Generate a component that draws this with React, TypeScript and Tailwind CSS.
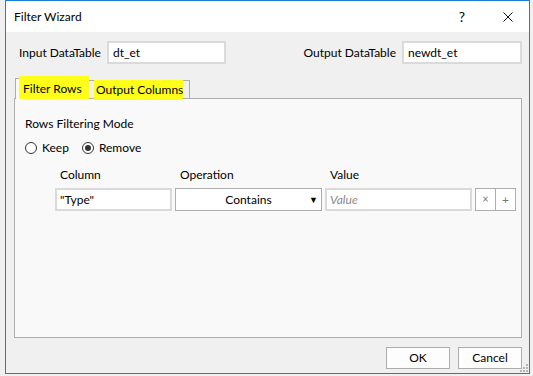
import React from 'react';

const font = { fontFamily: 'Lato, "Noto Sans", sans-serif' };

const Radio = ({ checked, label }: { checked?: boolean; label: string }) => (
  <label className="flex items-center gap-[5px]">
    <span className="w-[12px] h-[12px] rounded-full border border-[#333333] bg-white flex items-center justify-center">
      {checked && <span className="w-[6px] h-[6px] rounded-full bg-[#333333]" />}
    </span>
    <span>{label}</span>
  </label>
);

export default function App() {
  return (
    <div className="w-[533px] h-[376px] bg-[#f0f0f0] overflow-hidden text-[12px] text-black" style={font}>
      <div className="relative ml-[5px] w-[525px] h-[374px] border border-[#1a7fd4] bg-[#f0f0f0] flex flex-col">
        {/* title bar */}
        <div className="h-[31px] bg-white flex items-center pl-[8px] shrink-0">
          <span>Filter Wizard</span>
          <span className="ml-auto mr-[38px] text-[14px]">?</span>
          <svg width="10" height="10" viewBox="0 0 10 10" className="mr-[16px]">
            <path d="M0.5 0.5 L9.5 9.5 M9.5 0.5 L0.5 9.5" stroke="#111" strokeWidth="1" />
          </svg>
        </div>

        <div className="flex-1 flex flex-col pl-[8px] pr-[7px]">
          {/* table names */}
          <div className="mt-[9px] h-[23px] flex items-center pl-[5px]">
            <span>Input DataTable</span>
            <div className="ml-[6px] w-[119px] h-[23px] border-2 border-[#dadada] bg-white flex items-center px-[4px]">dt_et</div>
            <span className="ml-auto">Output DataTable</span>
            <div className="ml-[6px] w-[120px] h-[23px] border-2 border-[#dadada] bg-white flex items-center px-[4px]">newdt_et</div>
          </div>

          {/* tabs */}
          <div className="mt-[14px] h-[20px] flex items-end pl-[1px] whitespace-nowrap">
            <div className="relative z-10 -mb-px w-[74px] h-[21px] border border-b-0 border-[#adadad] bg-[#f9f9f9] flex items-center pl-[7px]">
              <span className="absolute left-[3px] -top-[3px] w-[70px] h-[23px] bg-[#ffff1a]" />
              <span className="relative">Filter Rows</span>
            </div>
            <div className="relative w-[101px] h-[18px] border border-b-0 border-l-0 border-[#adadad] bg-[#f0f0f0] flex items-center pl-[7px]">
              <span className="absolute left-[5px] -top-[1px] w-[89px] h-[20px] bg-[#ffff1a]" />
              <span className="relative">Output Columns</span>
            </div>
          </div>

          {/* panel */}
          <div className="h-[240px] border border-[#adadad] bg-[#f9f9f9] flex flex-col pl-[10px]">
            <div className="mt-[17px] leading-[16px]">Rows Filtering Mode</div>
            <div className="mt-[8px] h-[16px] flex items-center gap-[13px]">
              <Radio label="Keep" />
              <Radio checked label="Remove" />
            </div>
            <div className="mt-[10px] ml-[30px] grid grid-cols-[120px_150px_150px_42px] h-[16px] items-center">
              <span className="pl-[5px]">Column</span>
              <span className="pl-[5px]">Operation</span>
              <span className="pl-[5px]">Value</span>
            </div>
            <div className="mt-[6px] ml-[30px] flex h-[23px]">
              <div className="w-[117px] h-[23px] border-2 border-[#dadada] bg-white flex items-center px-[3px]">"Type"</div>
              <div className="ml-[3px] w-[147px] h-[23px] border border-[#adadad] bg-white flex items-center justify-center relative">
                <span>Contains</span>
                <span className="absolute right-[3px] text-[9px]">▼</span>
              </div>
              <div className="ml-[3px] w-[147px] h-[23px] border-2 border-[#dadada] bg-white flex items-center px-[3px] italic text-[#8a8a8a]">Value</div>
              <div className="ml-[3px] w-[21px] h-[23px] border border-[#adadad] bg-white flex items-center justify-center text-[#777] text-[11px]">×</div>
              <div className="w-[20px] h-[23px] border border-l-0 border-[#adadad] bg-white flex items-center justify-center text-[#777] text-[12px]">+</div>
            </div>
          </div>

          {/* buttons */}
          <div className="mt-[9px] flex justify-end gap-[8px]">
            <button className="w-[64px] h-[22px] border border-[#adadad] bg-[#fdfdfd]">OK</button>
            <button className="w-[64px] h-[22px] border border-[#adadad] bg-[#fdfdfd]">Cancel</button>
          </div>
        </div>

        {/* resize grip */}
        <svg width="9" height="9" viewBox="0 0 9 9" className="absolute right-[1px] bottom-[1px]">
          <rect x="7" y="1" width="2" height="2" fill="#b5b5b5" />
          <rect x="4" y="4" width="2" height="2" fill="#b5b5b5" />
          <rect x="7" y="4" width="2" height="2" fill="#b5b5b5" />
          <rect x="1" y="7" width="2" height="2" fill="#b5b5b5" />
          <rect x="4" y="7" width="2" height="2" fill="#b5b5b5" />
          <rect x="7" y="7" width="2" height="2" fill="#b5b5b5" />
        </svg>
      </div>
    </div>
  );
}
